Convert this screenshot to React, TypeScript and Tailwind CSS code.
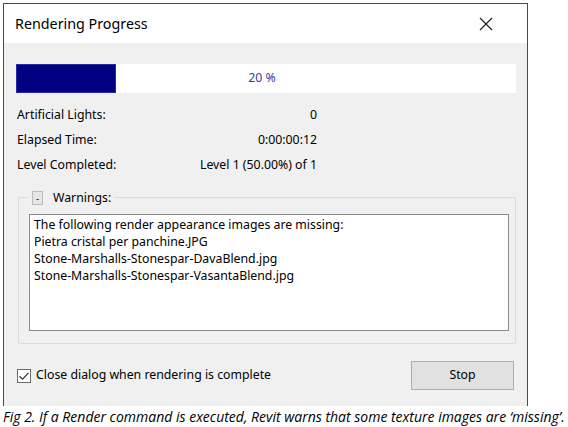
import React from "react";

const ui = { fontFamily: '"Noto Sans", "Open Sans", sans-serif' };

export default function App() {
  return (
    <div className="w-[568px] h-[427px] bg-white overflow-hidden relative" style={ui}>
      <div className="ml-[3px] mt-[3px] w-[525px] h-[403px] border-l border-t border-r border-[#4a4a4a] flex flex-col">
        {/* Title bar */}
        <div className="h-[39px] bg-white flex items-center justify-between pl-[11px] pr-[34px]">
          <span className="text-[14.3px] text-black mt-[1px]">Rendering Progress</span>
          <svg width="14" height="14" viewBox="0 0 14 14" className="mt-[1px]">
            <path d="M1 1 L13 13 M13 1 L1 13" stroke="#222" strokeWidth="1.2" fill="none" />
          </svg>
        </div>
        {/* Body */}
        <div className="flex-1 bg-[#f0f0f0] flex flex-col pl-[12px] pr-[12px] pt-[21px]">
          {/* progress */}
          <div className="relative w-[500px] h-[29px] bg-white">
            <div className="absolute left-0 top-0 h-[29px] w-[100px] bg-[#000080] border border-[#2a2aa0]" />
            <div className="absolute inset-0 flex items-center justify-center text-[12.3px] text-[#3838a8] pr-[8px]">20 %</div>
          </div>
          {/* rows */}
          <div className="mt-[13px] flex flex-col gap-[8px] text-[12.3px] text-black w-[301px] leading-[17px]">
            <div className="flex justify-between pl-[1px]"><span>Artificial Lights:</span><span>0</span></div>
            <div className="flex justify-between pl-[1px]"><span>Elapsed Time:</span><span>0:00:00:12</span></div>
            <div className="flex justify-between pl-[1px]"><span>Level Completed:</span><span>Level 1 (50.00%) of 1</span></div>
          </div>
          {/* group */}
          <div className="relative mt-[24px] ml-[2px] w-[498px] h-[147px] border border-[#dcdcdc] rounded-[2px]">
            <div className="absolute -top-[9px] left-[10px] flex items-center gap-[10px] bg-[#f0f0f0] px-[3px]">
              <div className="w-[11px] h-[14px] border border-[#bdbdbd] bg-[#e6e6e6] flex items-center justify-center text-[10px] leading-none text-[#333]">-</div>
              <span className="text-[12.3px] text-black leading-[17px]">Warnings:</span>
            </div>
            <div className="absolute left-[10px] top-[16px] w-[480px] h-[117px] bg-white border border-[#8a8a8a] px-[4px] pt-[1px] text-[12.3px] leading-[17px] text-black">
              <div>The following render appearance images are missing:</div>
              <div>Pietra cristal per panchine.JPG</div>
              <div>Stone-Marshalls-Stonespar-DavaBlend.jpg</div>
              <div>Stone-Marshalls-Stonespar-VasantaBlend.jpg</div>
            </div>
          </div>
          {/* bottom */}
          <div className="mt-[17px] flex items-center justify-between pr-[1px]">
            <div className="flex items-center gap-[5px] ml-[1px]">
              <div className="w-[14px] h-[14px] border border-[#6a6a6a] bg-white flex items-center justify-center">
                <svg width="12" height="12" viewBox="0 0 12 12">
                  <path d="M1.5 6.2 L4.6 9.2 L10.5 2.8" stroke="#333" strokeWidth="1.2" fill="none" />
                </svg>
              </div>
              <span className="text-[12.3px] text-black">Close dialog when rendering is complete</span>
            </div>
            <div className="w-[103px] h-[29px] bg-[#e1e1e1] border border-[#adadad] flex items-center justify-center text-[12.3px] text-black">Stop</div>
          </div>
        </div>
      </div>
      <div className="pl-[3px] pt-[1px] text-[14px] italic text-black leading-[19px]" style={{ fontFamily: '"Open Sans", sans-serif' }}>
        Fig 2. If a Render command is executed, Revit warns that some texture images are ‘missing’.
      </div>
    </div>
  );
}
